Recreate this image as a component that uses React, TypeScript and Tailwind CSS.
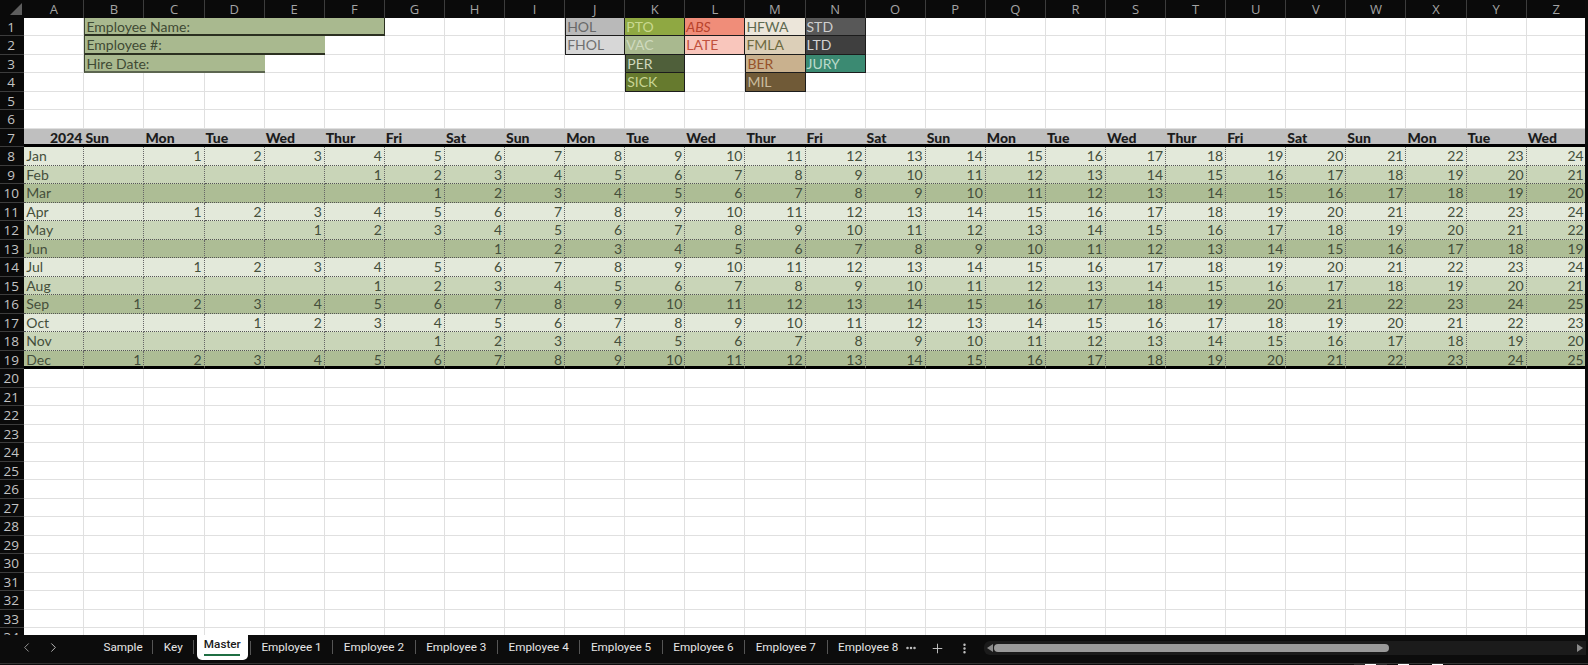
import { ChevronLeft, ChevronRight, Plus, MoreVertical, MoreHorizontal } from 'lucide-react';

const COLUMNS = 'ABCDEFGHIJKLMNOPQRSTUVWXYZ'.split('');
const WEEK = ['Sun', 'Mon', 'Tue', 'Wed', 'Thur', 'Fri', 'Sat'];
const BANDS = ['bg-[#e3e9da]', 'bg-[#c9d5b8]', 'bg-[#adbd95]'];

// month name + column index of the 1st
const MONTHS: [string, number][] = [
  ['Jan', 2],
  ['Feb', 5],
  ['Mar', 6],
  ['Apr', 2],
  ['May', 4],
  ['Jun', 7],
  ['Jul', 2],
  ['Aug', 5],
  ['Sep', 1],
  ['Oct', 3],
  ['Nov', 6],
  ['Dec', 1],
];

const TABS = ['Sample', 'Key', 'Master', 'Employee 1', 'Employee 2', 'Employee 3', 'Employee 4', 'Employee 5', 'Employee 6', 'Employee 7', 'Employee 8'];

const cellFont = "font-['Lato',sans-serif] font-normal text-[14px] leading-[18px]";

function RowHeader({ n }: { n: number }) {
  return (
    <div className="bg-[#0a0a0a] border-b border-[#3c3c3c] text-[#c4c4c4] text-[13.5px] leading-[18px] text-center font-['Open_Sans',sans-serif] pr-[2px]">
      {n}
    </div>
  );
}

function Blank() {
  return <div className="border-r border-b border-[#e0e0e0] bg-white" />;
}

function BlankCells({ count }: { count: number }) {
  return (
    <>
      {Array.from({ length: count }, (_, i) => (
        <Blank key={i} />
      ))}
    </>
  );
}

function NameField({ label, className }: { label: string; className: string }) {
  return (
    <div className={`${className} ${cellFont} bg-[#a9b98f] text-[#3f4a34] pl-px border-l border-l-[#3b4430]`}>
      {label}
    </div>
  );
}

function Key({ label, className }: { label: string; className: string }) {
  return <div className={`${cellFont} pl-px border-r border-b border-[#1c1c1c] ${className}`}>{label}</div>;
}

function MonthRow({ index, name, start }: { index: number; name: string; start: number }) {
  const band = BANDS[index % 3];
  const last = index === 11;
  const edge = last
    ? 'border-r border-dotted border-r-[#666] border-b-[3px] [border-bottom-style:solid] border-b-black'
    : 'border-r border-b border-dotted border-r-[#666] border-b-[#555]';
  return (
    <>
      <RowHeader n={index + 8} />
      <div className={`${band} ${edge} ${cellFont} pl-[2px] text-[#454f3b]`}>{name}</div>
      {COLUMNS.slice(1).map((c, i) => {
        const col = i + 1;
        const day = col >= start ? col - start + 1 : null;
        return (
          <div key={c} className={`${band} ${edge} ${cellFont} text-right pr-[2px] text-[#454f3b]`}>
            {day}
          </div>
        );
      })}
    </>
  );
}

function Sheet() {
  return (
    <div className="grid grid-cols-[24.3px_repeat(26,60.1px)] grid-rows-[17.8px] auto-rows-[18.5px] overflow-hidden flex-1 min-w-0 bg-white">
      {/* Column headers */}
      <div className="bg-[#0a0a0a] flex items-end justify-end pb-[3px] pr-[2px]">
        <div className="w-0 h-0 border-l-[12px] border-l-transparent border-b-[12px] border-b-[#5e5e5e]" />
      </div>
      {COLUMNS.map((c) => (
        <div
          key={c}
          className="bg-[#0a0a0a] border-r border-[#3c3c3c] text-[#a4a4a4] text-[13px] leading-[18px] text-center font-['Open_Sans',sans-serif]"
        >
          {c}
        </div>
      ))}

      {/* Row 1 */}
      <RowHeader n={1} />
      <Blank />
      <NameField label="Employee Name:" className="col-span-5 border-r border-b-2 border-r-[#2b3020] border-b-[#2b3020]" />
      <BlankCells count={3} />
      <Key label="HOL" className="border-l bg-[#b9b9b9] text-[#686868]" />
      <Key label="PTO" className="bg-[#8fa842] text-[#c9d88f]" />
      <Key label="ABS" className="bg-[#f08d79] text-[#b8432c] italic" />
      <Key label="HFWA" className="bg-[#ece6da] text-[#5e6a50]" />
      <Key label="STD" className="bg-[#585858] text-[#cfcfcf]" />
      <BlankCells count={12} />

      {/* Row 2 */}
      <RowHeader n={2} />
      <Blank />
      <NameField label="Employee #:" className="col-span-4 border-b-2 border-b-[#2b3020]" />
      <BlankCells count={4} />
      <Key label="FHOL" className="border-l bg-[#d7d7d7] text-[#707070]" />
      <Key label="VAC" className="bg-[#a9b98f] text-[#cfd9be]" />
      <Key label="LATE" className="bg-[#f9c6bc] text-[#c2513d]" />
      <Key label="FMLA" className="bg-[#dccfb8] text-[#6e6a40]" />
      <Key label="LTD" className="bg-[#3f3f3f] text-[#d2d2d2]" />
      <BlankCells count={12} />

      {/* Row 3 */}
      <RowHeader n={3} />
      <Blank />
      <NameField label="Hire Date:" className="col-span-3 border-b-2 border-b-[#5c6650]" />
      <BlankCells count={6} />
      <Key label="PER" className="border-l bg-[#4f5f3a] text-[#cfd8bd]" />
      <Blank />
      <Key label="BER" className="border-l bg-[#c9b18e] text-[#96522a]" />
      <Key label="JURY" className="bg-[#3b8a72] text-[#bcdacb]" />
      <BlankCells count={12} />

      {/* Row 4 */}
      <RowHeader n={4} />
      <BlankCells count={10} />
      <Key label="SICK" className="border-l bg-[#667a2e] text-[#c8d594]" />
      <Blank />
      <Key label="MIL" className="border-l bg-[#705a37] text-[#cbbc9e]" />
      <BlankCells count={13} />

      <RowHeader n={5} />
      <BlankCells count={26} />
      <RowHeader n={6} />
      <BlankCells count={26} />

      {/* Row 7: year and weekdays */}
      <RowHeader n={7} />
      <div className="bg-[#bfbfbf] border-b-[3px] border-black text-right pr-[2px] font-['Lato',sans-serif] font-black text-[14px] leading-[18px] text-[#1c1c1c]">
        2024
      </div>
      {COLUMNS.slice(1).map((c, i) => (
        <div
          key={c}
          className="bg-[#bfbfbf] border-b-[3px] border-black pl-px font-['Lato',sans-serif] font-black text-[14px] leading-[18px] text-[#1c1c1c]"
        >
          {WEEK[i % 7]}
        </div>
      ))}

      {MONTHS.map(([name, start], i) => (
        <MonthRow key={name} index={i} name={name} start={start} />
      ))}

      {Array.from({ length: 15 }, (_, i) => (
        <div key={i} className="contents">
          <RowHeader n={i + 20} />
          <BlankCells count={26} />
        </div>
      ))}
    </div>
  );
}

function TabBar() {
  return (
    <div className="h-[30.4px] shrink-0 bg-[#0c0c0c] flex flex-col">
      <div className="h-[27px] flex items-start font-['Roboto',sans-serif] text-[11.7px] text-[#e6e6e6]">
        <div className="w-[103.5px] pl-[19px] pt-[5px] flex gap-[12px] text-[#9a9a9a] shrink-0">
          <ChevronLeft size={15} strokeWidth={1.5} />
          <ChevronRight size={15} strokeWidth={1.5} className="text-[#c0c0c0]" />
        </div>
        {TABS.map((t, i) =>
          t === 'Master' ? (
            <div key={t} className="flex items-start">
              <div className="ml-[2.5px] w-[51px] h-[25px] bg-white rounded-b-[5px] text-center text-[#1a1a1a] font-medium leading-[19px] flex flex-col items-center">
                {t}
                <div className="w-[36px] h-[2px] bg-[#1f6e43]" />
              </div>
              <div className="ml-[2px] mt-[6px] w-px h-[14px] bg-[#555]" />
            </div>
          ) : (
            <div key={t} className="flex items-center h-[27px] -mt-[1px]">
              <span className={`leading-[27px] ${t === 'Sample' ? 'pr-[9.6px]' : 'px-[10.6px]'}`}>{t}</span>
              {i < TABS.length - 1 && <div className="w-px h-[14px] bg-[#555]" />}
            </div>
          ),
        )}
        <div className="flex items-center h-[27px] -ml-[4px] gap-[13px] text-[#c8c8c8]">
          <MoreHorizontal size={12} strokeWidth={3} />
          <Plus size={15} strokeWidth={1.5} />
          <MoreVertical size={13} strokeWidth={2.5} />
        </div>
        <div className="ml-[13px] mt-[6px] flex-1 h-[14px] mr-[2px] bg-[#1b1b1b] rounded-l-[6px] flex items-center text-[#8a8a8a] text-[9px] pl-[3px] pr-[3px]">
          <div className="w-0 h-0 border-y-[4px] border-y-transparent border-r-[6px] border-r-[#8a8a8a]" />
          <div className="ml-px w-[395px] h-[8px] rounded-full bg-[#9a9a9a]" />
          <div className="ml-auto w-0 h-0 border-y-[4px] border-y-transparent border-l-[6px] border-l-[#8a8a8a]" />
        </div>
      </div>
      <div className="h-px bg-[#333] mt-[1px]" />
      <div className="flex-1 flex justify-end pr-[145px] items-end">
        <div className="w-[33px] h-full bg-[#2a2a2a] flex items-end justify-center">
          <div className="w-[11px] h-px bg-white" />
        </div>
        <div className="ml-[11px] w-[11px] h-px bg-white" />
        <div className="ml-[23px] w-[11px] h-px bg-white" />
      </div>
    </div>
  );
}

export default function App() {
  return (
    <div className="w-[1588px] h-[665px] bg-[#0c0c0c] flex flex-col overflow-hidden">
      <div className="flex-1 min-h-0 flex pr-[3.5px]">
        <Sheet />
      </div>
      <TabBar />
    </div>
  );
}
